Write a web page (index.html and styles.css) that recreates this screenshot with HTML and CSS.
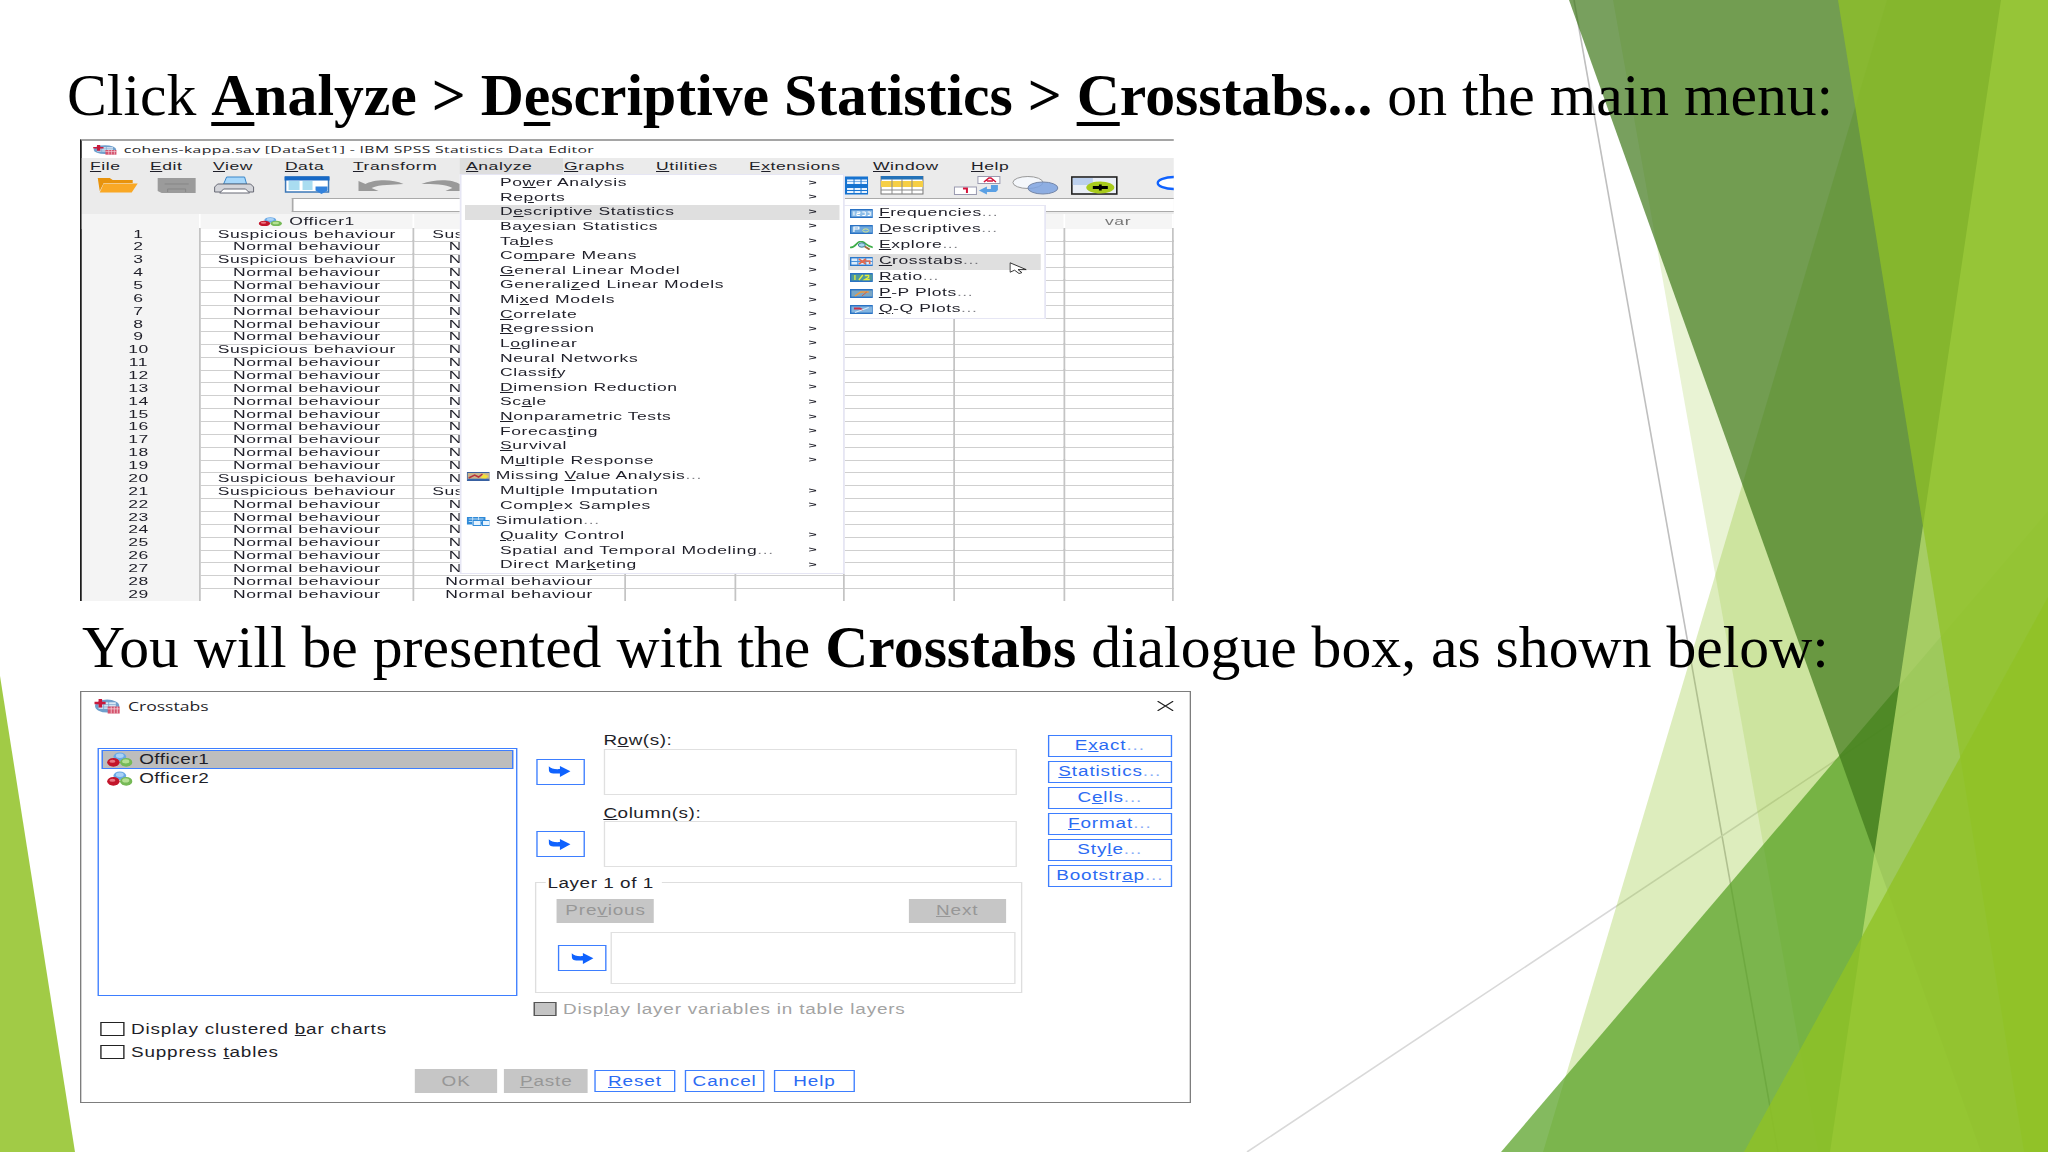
FILE: index.html
```html
<!DOCTYPE html>
<html lang="en">
<head>
  <meta charset="UTF-8">
  <title>Cohen's kappa - Crosstabs</title>
  <link rel="stylesheet" href="styles.css">
</head>
<body>

<!-- Shared icons -->
<svg width="0" height="0" class="defs">
  <symbol id="nominal" viewBox="0 0 26 16" preserveAspectRatio="none">
    <ellipse cx="13" cy="5" rx="6.5" ry="4.6" fill="#6aa9e6"/>
    <ellipse cx="13" cy="4" rx="4" ry="2.4" fill="#a9d2f7"/>
    <ellipse cx="6.5" cy="11" rx="6.3" ry="4.6" fill="#c3152b"/>
    <ellipse cx="5.5" cy="9.8" rx="3" ry="1.6" fill="#ea7683"/>
    <ellipse cx="19.5" cy="11" rx="6.3" ry="4.6" fill="#76b957"/>
    <ellipse cx="19" cy="10" rx="3.6" ry="2.2" fill="#b5e094"/>
  </symbol>
  <symbol id="spss" viewBox="0 0 26 16" preserveAspectRatio="none">
    <ellipse cx="13.5" cy="7.5" rx="12" ry="7" fill="#6f9fcc"/>
    <rect x="5" y="3.5" width="17" height="7" fill="#dce9f5"/>
    <path d="M5 6h17M5 8.500h17M10 3v8M15 3v8" stroke="#7aa3cc" stroke-width=".8"/>
    <path d="M5 0h3.500v3H12v2.500H8.500V9H5V5.500H1V3h4z" fill="#c8193c"/>
    <rect x="14" y="8" width="12" height="7.500" fill="#d4526c"/>
    <path d="M14 10.500h12M17.500 8v7.500M20.500 8v7.500M23.500 8v7.500" stroke="#f6d5dc" stroke-width=".8"/>
  </symbol>
  <symbol id="arrow" viewBox="0 0 24 14" preserveAspectRatio="none">
    <path d="M0 1C3 4 6 5 12 4.600V1L23 7l-11 6.500V9.500H5C1 9 0 7 0 1z" fill="#0f62fe"/>
  </symbol>
</svg>

<!-- Slide background -->
<svg class="backdrop" viewBox="0 0 2048 1152">
  <path d="M1574 0L1778 1152" stroke="#bfbfbf" stroke-width="1.600"/>
  <path d="M1247 1152L2048 619" stroke="#d9d9d9" stroke-width="1.600"/>
  <path d="M1887 0H2048V1152H1543z" fill="#90c226" fill-opacity=".3"/>
  <path d="M1613 0H2048V1152H1818z" fill="#90c226" fill-opacity=".2"/>
  <path d="M2048 511V1152H1501z" fill="#54a021" fill-opacity=".72"/>
  <path d="M1569 0H2048V1152H1981z" fill="#3f7819" fill-opacity=".7"/>
  <path d="M2001 0H2048V1152H1830z" fill="#c0e474" fill-opacity=".7"/>
  <path d="M1838 0H2048V1152H2024z" fill="#90c226" fill-opacity=".72"/>
  <path d="M2048 597V1152H1744z" fill="#90c226" fill-opacity=".8"/>
  <path d="M0 676L75 1152H0z" fill="#90c226" fill-opacity=".85"/>
</svg>

<main class="slide">
  <p class="line first">Click <b><u>A</u>nalyze &gt; D<u>e</u>scriptive Statistics &gt; <u>C</u>rosstabs...</b> on the main menu:</p>

  <!-- Data editor -->
  <section class="shot editor-shot">
    <div class="editor">
      <div class="editor-title">
        <svg class="app-icon"><use href="#spss"/></svg>
        <span>cohens-kappa.sav [DataSet1] - IBM SPSS Statistics Data Editor</span>
      </div>
      <nav class="menubar">
        <span><u>F</u>ile</span><span><u>E</u>dit</span><span><u>V</u>iew</span><span><u>D</u>ata</span><span><u>T</u>ransform</span><span class="open"><u>A</u>nalyze</span><span><u>G</u>raphs</span><span><u>U</u>tilities</span><span>E<u>x</u>tensions</span><span><u>W</u>indow</span><span><u>H</u>elp</span>
      </nav>
      <svg class="toolbar" viewBox="80 174 1093 24" preserveAspectRatio="none">
        <!-- open -->
        <path d="M96 178h12l3 2h20v3h-29l-4 8z" fill="#e8930c"/>
        <path d="M102 183.500h34l-6 9H98z" fill="#f9a825"/>
        <!-- save -->
        <path d="M156 178h38v15h-34l-4-2z" fill="#9b9b9b"/>
        <path d="M163 184h24M166 192v-3h18v3" stroke="#868686" fill="none"/>
        <!-- print -->
        <path d="M222 184l3-7h18l2 7z" fill="#a8d8fb" stroke="#3a87c8"/>
        <path d="M216 184h33l3 3v5h-39v-5z" fill="#d4d5da" stroke="#666874"/>
        <path d="M222 189h22l4 4h-30z" fill="#fff" stroke="#666874"/>
        <!-- recall dialog -->
        <rect x="284" y="177" width="43" height="15" fill="#fff" stroke="#3c78b8" stroke-width="1.500"/>
        <rect x="283" y="176.500" width="45" height="4" fill="#1769c6"/>
        <rect x="287" y="181" width="11" height="9" fill="#a9dcf0"/>
        <rect x="301" y="181" width="10" height="9" fill="#a9dcf0"/>
        <path d="M314 186.500h12v4l-6 3.500-6-3.500z" fill="#3382dc"/>
        <!-- undo, redo -->
        <path d="M357 181v10h20l-7-3c9-4 21-3 32-4-12-6-32-4-38 0z" fill="#999"/>
        <path d="M420 184c15-6 33-4 38 0l6-3v10h-20l7-3c-6-4-20-4-31-4z" fill="#999"/>
        <!-- variables -->
        <rect x="840" y="176.500" width="27" height="18" fill="#1673d0"/>
        <path d="M846 180.500h20M846 183h20M846 189h20M846 192h20" stroke="#eaf4ff" stroke-width="1.800"/>
        <path d="M853 179v15M860 179v15" stroke="#1673d0"/>
        <!-- data sheet -->
        <rect x="880" y="176.500" width="42" height="17.500" fill="#fff" stroke="#777"/>
        <rect x="880" y="176" width="42" height="3.500" fill="#2472b8"/>
        <rect x="880" y="181" width="42" height="6" fill="#f6cf45"/>
        <path d="M891 179v15M901 179v15M911 179v15M880 190h42" stroke="#8a8a8a"/>
        <!-- value labels -->
        <rect x="977" y="176.500" width="22" height="7" fill="#fff" stroke="#9a9ab0"/>
        <path d="M983 182l5-4h2l5 4M986 181h6" stroke="#d4143c" stroke-width="1.600" fill="none"/>
        <rect x="953.500" y="187" width="22" height="7.500" fill="#fff" stroke="#9a9ab0"/>
        <path d="M962 188.500h4V193" stroke="#d4143c" stroke-width="2" fill="none"/>
        <path d="M978 190.500l8-4v2.500h4v-4h7v5l-2 2h-9v2.500z" fill="#5aa0e4"/>
        <!-- sets -->
        <ellipse cx="1027" cy="182.500" rx="15" ry="6" fill="#f4f7fb" stroke="#999"/>
        <ellipse cx="1042" cy="188" rx="15" ry="6" fill="#7ea3e0" fill-opacity=".85" stroke="#7386a8"/>
        <!-- add -->
        <rect x="1071" y="177" width="45" height="17" fill="#e9eef6" stroke="#222" stroke-width="1.600"/>
        <rect x="1072" y="178" width="20" height="7" fill="#bcd0ee"/>
        <ellipse cx="1099.500" cy="187.500" rx="14" ry="6" fill="#a9cb1c"/>
        <path d="M1092 187.500h15M1099.500 184.500v6" stroke="#000" stroke-width="2.800"/>
        <!-- search -->
        <ellipse cx="1173" cy="183" rx="16" ry="6" fill="#fff" stroke="#0f62fe" stroke-width="2.400"/>
      </svg>
      <div class="formula"><div class="formula-box"></div></div>
      <div class="grid" id="grid"></div>

      <!-- Analyze menu -->
      <div class="menu">
        <div class="item more">Po<u>w</u>er Analysis</div>
        <div class="item more">Re<u>p</u>orts</div>
        <div class="item more active">D<u>e</u>scriptive Statistics</div>
        <div class="item more">Ba<u>y</u>esian Statistics</div>
        <div class="item more">Ta<u>b</u>les</div>
        <div class="item more">Co<u>m</u>pare Means</div>
        <div class="item more"><u>G</u>eneral Linear Model</div>
        <div class="item more">Generali<u>z</u>ed Linear Models</div>
        <div class="item more">Mi<u>x</u>ed Models</div>
        <div class="item more"><u>C</u>orrelate</div>
        <div class="item more"><u>R</u>egression</div>
        <div class="item more">L<u>o</u>glinear</div>
        <div class="item more">Neural Networks</div>
        <div class="item more">Classi<u>f</u>y</div>
        <div class="item more"><u>D</u>imension Reduction</div>
        <div class="item more">Sc<u>a</u>le</div>
        <div class="item more"><u>N</u>onparametric Tests</div>
        <div class="item more">Forecas<u>t</u>ing</div>
        <div class="item more"><u>S</u>urvival</div>
        <div class="item more">M<u>u</u>ltiple Response</div>
        <div class="item with-icon">
          <svg viewBox="0 0 24 9" preserveAspectRatio="none"><rect x=".5" y=".5" width="23" height="8" fill="#c9b58c" stroke="#3a5f9c"/><path d="M2 6l6-3 4 2 4-3" stroke="#b8323c" stroke-width="1.500" fill="none"/><path d="M14 6l3-4 5 2-3 3z" fill="#f2df3a"/><path d="M1 7.500h22" stroke="#3566b0" stroke-width="1.500"/></svg>
          <span>Missing <u>V</u>alue Analysis<i>...</i></span>
        </div>
        <div class="item more">Mult<u>i</u>ple Imputation</div>
        <div class="item more">Comp<u>l</u>ex Samples</div>
        <div class="item with-icon">
          <svg viewBox="0 0 24 9" preserveAspectRatio="none"><rect width="19" height="7.500" fill="#2f8ad8"/><path d="M2 2h15M2 4.500h15M6 0v7M12 0v7" stroke="#cfe7fb" stroke-width=".9"/><rect x="6.500" y="3.500" width="8" height="5" fill="#e4f2fe" stroke="#2f8ad8"/><rect x="16" y="3.500" width="7.500" height="5" fill="#e4f2fe" stroke="#2f8ad8"/></svg>
          <span>Simulation<i>...</i></span>
        </div>
        <div class="item more"><u>Q</u>uality Control</div>
        <div class="item more">Spatial and Temporal Modeling<i>...</i></div>
        <div class="item more">Direct Mar<u>k</u>eting</div>
      </div>

      <!-- Descriptive Statistics submenu -->
      <div class="submenu">
        <div class="item with-icon">
          <svg viewBox="0 0 24 9" preserveAspectRatio="none"><rect x=".7" y=".7" width="22.600" height="7.600" fill="#8fbfe9" stroke="#2a72c4" stroke-width="1.400"/><path d="M4 2.500v4M7 3h3v1.500H7V6.500h3M12.500 3h3v3.500h-3M18 3h2.500v3.500H18" stroke="#fff" fill="none"/></svg>
          <span><u>F</u>requencies<i>...</i></span>
        </div>
        <div class="item with-icon">
          <svg viewBox="0 0 24 9" preserveAspectRatio="none"><rect x=".7" y=".7" width="22.600" height="7.600" fill="#6fa8dc" stroke="#2a72c4" stroke-width="1.400"/><path d="M4 7V2h5v2H4" stroke="#fff" stroke-width="1.200" fill="none"/><ellipse cx="16" cy="5.500" rx="3" ry="1.600" stroke="#d6e88c" fill="none"/></svg>
          <span><u>D</u>escriptives<i>...</i></span>
        </div>
        <div class="item with-icon">
          <svg viewBox="0 0 24 9" preserveAspectRatio="none"><path d="M0 6.500c7 0 6-6 11-6s5 5 13 6" stroke="#3fae49" stroke-width="1.700" fill="none"/><ellipse cx="12" cy="4" rx="3.500" ry="2.200" fill="#a9d5ee" stroke="#3a7a8c"/><path d="M15 5.500l5 3" stroke="#a06a3a" stroke-width="2"/></svg>
          <span><u>E</u>xplore<i>...</i></span>
        </div>
        <div class="item with-icon active">
          <svg viewBox="0 0 24 9" preserveAspectRatio="none"><rect x=".7" y=".7" width="22.600" height="7.600" fill="#dcecfb" stroke="#2a78cc" stroke-width="1.400"/><path d="M1 4.500h22M8 1v7M16 1v7" stroke="#4a92dc" stroke-width="1.200"/><path d="M9 2l7 5M16 2L9 7M14 4h6v3" stroke="#e2694e" stroke-width="1.700" fill="none"/></svg>
          <span><u>C</u>rosstabs<i>...</i></span>
        </div>
        <div class="item with-icon">
          <svg viewBox="0 0 24 9" preserveAspectRatio="none"><rect x=".7" y=".7" width="22.600" height="7.600" fill="#4e9a9c" stroke="#2a72c4" stroke-width="1.400"/><path d="M5 2v5M9 7l4-5M15 2.500h4v1.700l-4 2.300h5" stroke="#e6ee3c" stroke-width="1.300" fill="none"/></svg>
          <span><u>R</u>atio<i>...</i></span>
        </div>
        <div class="item with-icon">
          <svg viewBox="0 0 24 9" preserveAspectRatio="none"><rect x=".7" y=".7" width="22.600" height="7.600" fill="#7ba6c4" stroke="#2a72c4" stroke-width="1.400"/><path d="M5 7l6-4h8" stroke="#f09a3c" stroke-width="1.500" fill="none"/><path d="M12 7l5-4" stroke="#d85c3c"/></svg>
          <span><u>P</u>-P Plots<i>...</i></span>
        </div>
        <div class="item with-icon">
          <svg viewBox="0 0 24 9" preserveAspectRatio="none"><rect x=".7" y=".7" width="22.600" height="7.600" fill="#82b4e0" stroke="#2a72c4" stroke-width="1.400"/><path d="M4 3.500h6l3 1.500" stroke="#c83248" stroke-width="1.800" fill="none"/><path d="M5 7.500l14-5" stroke="#dcecf8" stroke-width="1.200"/></svg>
          <span><u>Q</u>-Q Plots<i>...</i></span>
        </div>
      </div>
      <svg class="cursor" viewBox="0 0 18 12" preserveAspectRatio="none"><path d="M.8.800v9.400l4.400-2 4.400 3.300 2.800-.9-3.800-3h8z" fill="#fff" stroke="#222" stroke-width=".9"/></svg>
    </div>
  </section>

  <p class="line second">You will be presented with the <b>Crosstabs</b> dialogue box, as shown below:</p>

  <!-- Crosstabs dialog -->
  <section class="shot dialog-shot">
    <div class="dialog">
      <div class="dialog-title">
        <svg class="app-icon"><use href="#spss"/></svg>
        <span>Crosstabs</span>
        <svg class="close" viewBox="0 0 16 10" preserveAspectRatio="none"><path d="M0 0l16 10M16 0L0 10" stroke="#222" stroke-width="1.200"/></svg>
      </div>
      <div class="dialog-body">
        <div class="source">
          <div class="var-list">
            <div class="var selected"><svg><use href="#nominal"/></svg>Officer1</div>
            <div class="var"><svg><use href="#nominal"/></svg>Officer2</div>
          </div>
          <label class="check"><span class="box"></span><span>Display clustered <u>b</u>ar charts</span></label>
          <label class="check"><span class="box"></span><span>Suppress <u>t</u>ables</span></label>
        </div>
        <div class="targets">
          <div class="target">
            <button class="move"><svg><use href="#arrow"/></svg></button>
            <div class="field"><div class="label">R<u>o</u>w(s):</div><div class="drop"></div></div>
          </div>
          <div class="target">
            <button class="move"><svg><use href="#arrow"/></svg></button>
            <div class="field"><div class="label"><u>C</u>olumn(s):</div><div class="drop"></div></div>
          </div>
          <div class="layer">
            <div class="legend">Layer 1 of 1</div>
            <div class="layer-nav"><button class="btn off">Pre<u>v</u>ious</button><button class="btn off"><u>N</u>ext</button></div>
            <div class="layer-row">
              <button class="move"><svg><use href="#arrow"/></svg></button>
              <div class="drop"></div>
            </div>
          </div>
          <label class="check disabled"><span class="box"></span><span>Disp<u>l</u>ay layer variables in table layers</span></label>
        </div>
        <div class="side">
          <button class="btn">E<u>x</u>act<i>...</i></button>
          <button class="btn"><u>S</u>tatistics<i>...</i></button>
          <button class="btn">C<u>e</u>lls<i>...</i></button>
          <button class="btn"><u>F</u>ormat<i>...</i></button>
          <button class="btn">Sty<u>l</u>e<i>...</i></button>
          <button class="btn">Bootstr<u>a</u>p<i>...</i></button>
        </div>
      </div>
      <div class="dialog-footer">
        <button class="btn off">OK</button>
        <button class="btn off"><u>P</u>aste</button>
        <button class="btn"><u>R</u>eset</button>
        <button class="btn">Cancel</button>
        <button class="btn">Help</button>
      </div>
    </div>
  </section>
</main>

<script>
  const S = "Suspicious behaviour";
  const N = "Normal behaviour";
  const officer1 = [1, 3, 10, 20, 21];
  const officer2 = [1, 21];

  // the open menu hides the rest of the second column down to row 27
  function secondCell(i) {
    if (i > 27) return `<div>${N}</div>`;
    return officer2.includes(i) ? '<div class="cut sus">Sus</div>' : '<div class="cut">N</div>';
  }

  let html = '<div class="row head"><div></div><div><svg><use href="#nominal"/></svg>Officer1</div><div></div><div></div><div></div><div></div><div></div><div class="var-name">var</div></div>';
  for (let i = 1; i <= 29; i++) {
    html += `<div class="row"><div>${i}</div>
      <div>${officer1.includes(i) ? S : N}</div>
      ${secondCell(i)}
      <div></div><div></div><div></div><div></div><div></div></div>`;
  }
  document.getElementById("grid").innerHTML = html;
</script>

</body>
</html>
```
FILE: styles.css
```css
* { box-sizing: border-box; }
body { margin: 0; background: #fff; width: 2048px; height: 1152px; overflow: hidden; position: relative; }
.defs { position: absolute; }
.backdrop { position: absolute; left: 0; top: 0; width: 2048px; height: 1152px; }
.slide { position: relative; padding: 53px 0 0 80px; }

.line {
  margin: 0;
  font: 59.7px/84px "Liberation Serif", serif;
  color: #000;
  white-space: nowrap;
}
.line u { text-underline-offset: 7px; text-decoration-thickness: 4px; text-decoration-skip-ink: none; }
.first { margin-left: -13px; height: 86px; }
.second { margin-left: 2px; padding-top: 4px; height: 90px; }

/* Both windows are drawn narrow and stretched sideways */
.shot { overflow: hidden; font-family: "Liberation Sans", sans-serif; color: #1e1e28; }
.shot i { font-style: normal; opacity: .55; }
.editor-shot { width: 1094px; height: 462px; }
.dialog-shot { width: 1111px; height: 412px; }

.editor {
  position: relative;
  width: 625px;
  height: 462px;
  transform: scaleX(1.75);
  transform-origin: 0 0;
  background: #fff;
  border-top: 2px solid #a5a5a5;
  border-left: 1.2px solid #1c1c1c;
  font-size: 10px;
  letter-spacing: .34px;
}
.editor-title {
  height: 17px;
  display: flex;
  align-items: center;
  padding-left: 6px;
  font: 9px "Open Sans", sans-serif;
  letter-spacing: .2px;
  white-space: nowrap;
}
.editor-title .app-icon { width: 14px; height: 10px; margin-right: 4px; }
.menubar {
  height: 16px;
  background: #ebebeb;
  padding-left: 4.700px;
  display: grid;
  grid-template-columns: 34.300px 36px 41.100px 38.900px 64.600px 56px 52.600px 53.100px 70.900px 56px 1fr;
  line-height: 17px;
}
.menubar .open { background: #dedede; margin-left: -3.500px; padding-left: 3.500px; margin-right: 1px; }
.toolbar { display: block; width: 100%; height: 24px; background: #ebebeb; }
.formula { height: 16px; padding: 0 0 1.500px 120px; background: #ebebeb; }
.formula-box { height: 14px; background: #fff; border: 1px solid #aaa; border-right: 0; }

.row {
  display: grid;
  grid-template-columns: 68.400px 121.400px 121.300px 62.500px 62.700px 62.800px 62.500px 62.200px;
  height: 12.870px;
  line-height: 13.400px;
  text-align: center;
  white-space: nowrap;
}
.row > div { border-right: 1px solid #c4c4c4; border-bottom: 1px solid #cfcfcf; }
.row > div:first-child { background: #f4f4f4; padding-right: 2.500px; }
.row > .cut { text-align: left; padding-left: 20px; }
.row > .sus { padding-left: 10.500px; }
.head { height: 13.600px; line-height: 15px; }
.head > div { background: #f5f5f5; border-color: #fff; border-bottom: 0; }
.head svg { width: 13.500px; height: 9.500px; margin-right: 4px; vertical-align: -1px; }
.head .var-name { color: #777; }

.menu, .submenu { position: absolute; background: #fff; border: 1px solid #e6e6f4; white-space: nowrap; }
.menu { left: 215.500px; top: 33px; width: 220.500px; height: 400px; padding: 1px 2px 0; }
.item { position: relative; height: 14.630px; line-height: 14.900px; padding-left: 20.500px; }
.item.active { background: #dfdfdf; }
.item.more::after {
  content: ">";
  position: absolute;
  right: 13px;
  top: -.5px;
  font-size: 8px;
  letter-spacing: 0;
  font-weight: bold;
}
.with-icon { display: flex; align-items: center; height: 15.600px; padding-left: 1px; }
.with-icon svg { width: 13.500px; height: 9px; margin-right: 3.500px; }
.submenu { left: 435px; top: 63.500px; width: 115.500px; height: 114px; padding: .5px 1.500px 0; }
.submenu .item { height: 15.880px; }
.cursor { position: absolute; left: 530px; top: 121px; width: 10.500px; height: 12px; }

.dialog {
  width: 822.500px;
  height: 411.500px;
  transform: scaleX(1.35);
  transform-origin: 0 0;
  background: #fff;
  border: 1.200px solid #7d7d7d;
  font-size: 14px;
  letter-spacing: .4px;
}
.dialog-title {
  height: 30px;
  display: flex;
  align-items: center;
  padding: 0 12px 2px 9px;
  font: 13px "Open Sans", sans-serif;
  letter-spacing: 0;
}
.dialog-title .app-icon { width: 19.500px; height: 15px; margin-right: 6px; }
.close { width: 12px; height: 10px; margin-left: auto; }
.dialog-body { display: flex; height: 345px; padding-left: 11.800px; }

.source { width: 311.500px; padding-top: 26px; }
.var-list { height: 248px; border: 1.200px solid #3d7eff; padding: .8px 2.500px; margin-bottom: 22px; }
.var { height: 19px; display: flex; align-items: center; padding-left: 4px; }
.var.selected { background: #bdbdbd; border: 1px solid #3d7eff; padding-left: 3px; }
.var svg { width: 19px; height: 15px; margin-right: 4.500px; }
.check { display: flex; align-items: center; height: 22.500px; line-height: 22px; white-space: nowrap; letter-spacing: .6px; }
.source .check { padding-left: 2px; }
.box { width: 18.500px; height: 14px; border: 1.300px solid #222; margin-right: 4.500px; }
.check.disabled { color: #a3a3a3; }
.disabled .box { background: #c4c4c4; border-color: #555; width: 17.500px; }

.targets { width: 361px; margin-left: 13px; }
.target { display: flex; align-items: flex-end; height: 72.500px; padding-left: .8px; }
.move {
  width: 35.600px;
  height: 26px;
  border: 1.300px solid #3d7eff;
  background: #fff;
  padding: 0;
  display: flex;
  align-items: center;
  justify-content: center;
}
.move svg { width: 17px; height: 12.500px; }
.target .move { margin: 0 14px 10px 0; }
.field { width: 306px; }
.label { height: 18.500px; line-height: 20px; }
.drop { height: 46px; border: 1px solid #e0e0e0; background: #fff; }
.layer { height: 111px; margin-top: 14.500px; border: 1px solid #dedede; padding: 0 11.500px 0 15px; }
.legend { width: 86px; height: 20px; line-height: 19px; margin: -9px 0 0 -8px; padding-left: 1px; background: #fff; white-space: nowrap; }
.layer-nav { display: flex; justify-content: space-between; margin-top: 5px; }
.layer-nav .btn { width: 72px; }
.layer-row { display: flex; align-items: center; margin: 9.500px -7px 0 1px; }
.layer-row .drop { flex: 1; height: 52px; margin-left: 3.500px; }
.targets .disabled { margin-top: 5px; margin-left: -1.500px; }

.btn {
  height: 22.500px;
  border: 1.200px solid #3d7eff;
  background: #fff;
  color: #2b6bf3;
  font: 14px/19px "Liberation Sans", sans-serif;
  letter-spacing: .65px;
  padding: 0;
  white-space: nowrap;
}
.btn.off { height: 24px; border: 0; background: #c6c6c6; color: #979797; }
.side { width: 92px; margin-left: 18.500px; padding-top: 12.500px; display: flex; flex-direction: column; gap: 3.500px; }
.dialog-footer { display: flex; align-items: center; padding-left: 246.700px; margin-top: 2px; }
.dialog-footer .btn { width: 59.500px; margin-right: 7px; }
.dialog-footer .btn.off { width: 61.800px; margin-right: 5px; }
```
